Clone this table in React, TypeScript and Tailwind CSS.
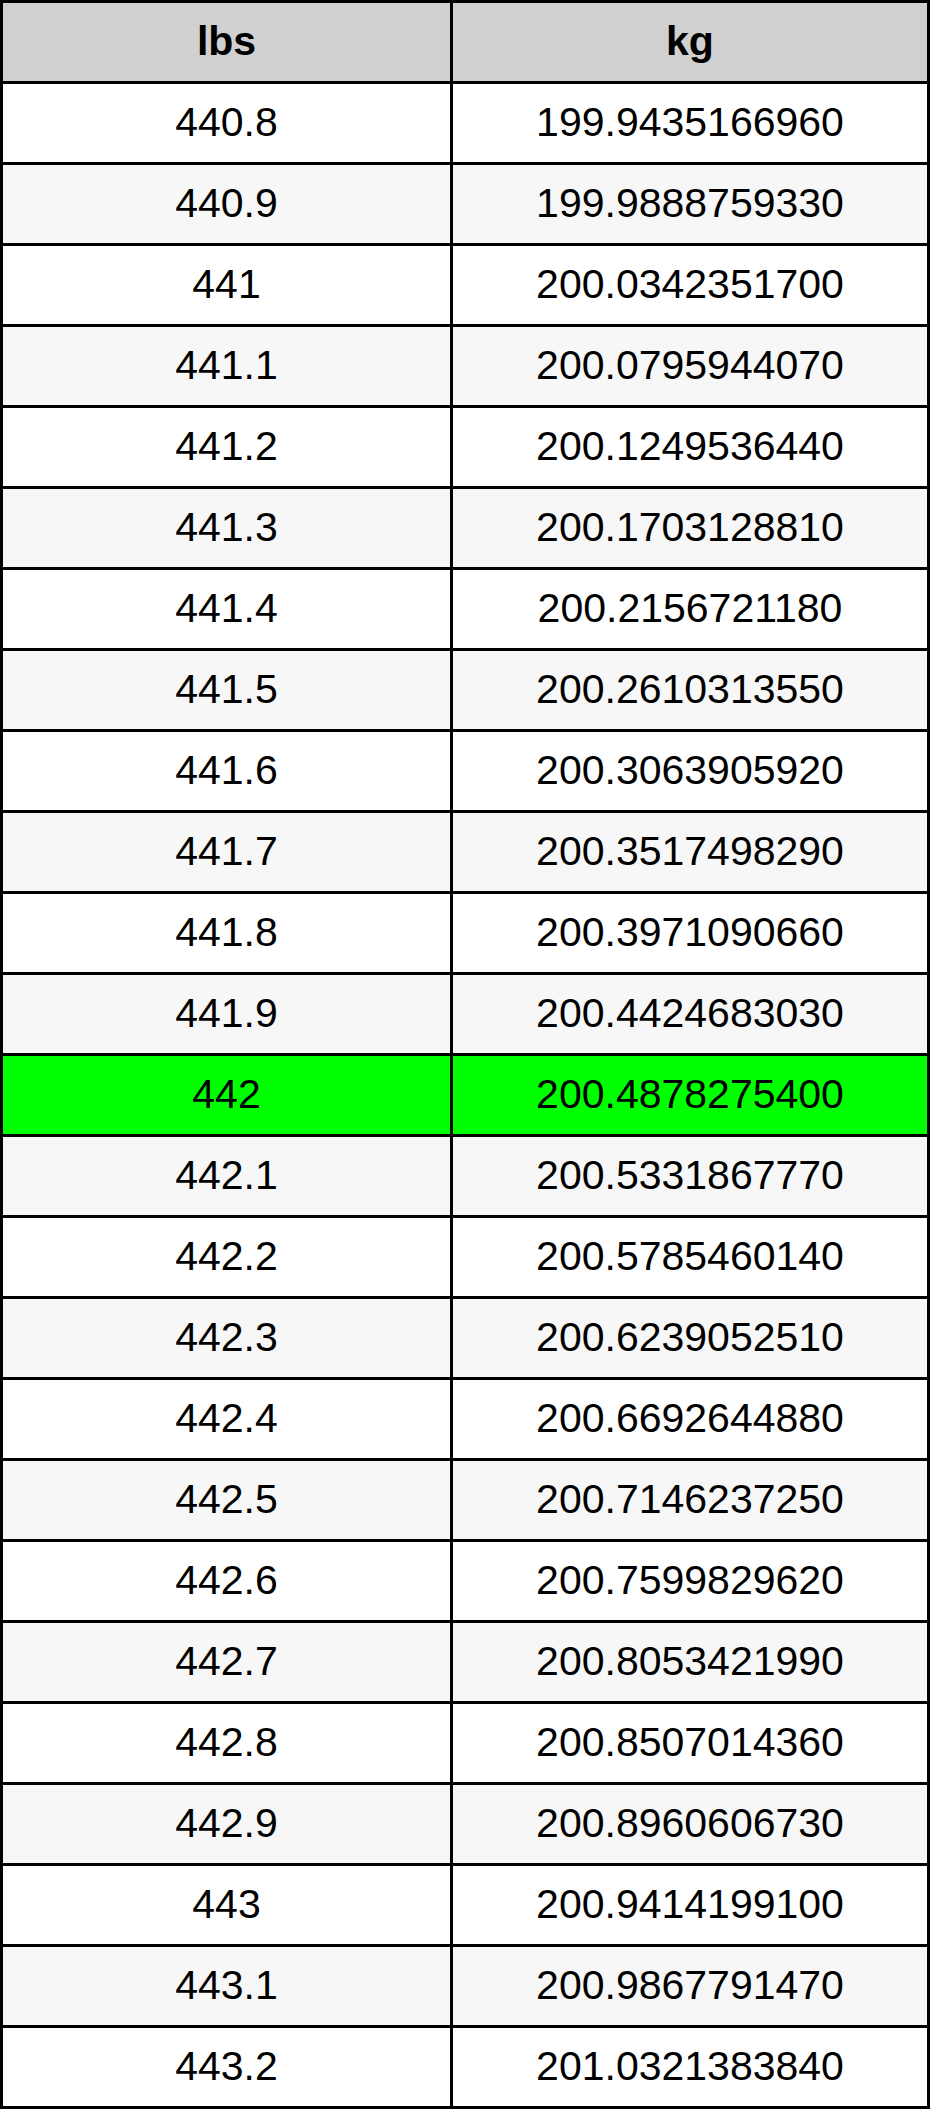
const rows: [string, string][] = [
  ["440.8", "199.9435166960"],
  ["440.9", "199.9888759330"],
  ["441", "200.0342351700"],
  ["441.1", "200.0795944070"],
  ["441.2", "200.1249536440"],
  ["441.3", "200.1703128810"],
  ["441.4", "200.2156721180"],
  ["441.5", "200.2610313550"],
  ["441.6", "200.3063905920"],
  ["441.7", "200.3517498290"],
  ["441.8", "200.3971090660"],
  ["441.9", "200.4424683030"],
  ["442", "200.4878275400"],
  ["442.1", "200.5331867770"],
  ["442.2", "200.5785460140"],
  ["442.3", "200.6239052510"],
  ["442.4", "200.6692644880"],
  ["442.5", "200.7146237250"],
  ["442.6", "200.7599829620"],
  ["442.7", "200.8053421990"],
  ["442.8", "200.8507014360"],
  ["442.9", "200.8960606730"],
  ["443", "200.9414199100"],
  ["443.1", "200.9867791470"],
  ["443.2", "201.0321383840"],
];

const rowBg = (i: number, value: string) => {
  if (value === "442") return "bg-[#00ff00]";
  return i % 2 === 0 ? "bg-white" : "bg-[#f7f7f7]";
};

const cell =
  "h-[81px] flex items-center justify-center border-r-[3px] border-b-[3px] border-black";

export default function App() {
  return (
    <div className="w-[930px] bg-white font-['Liberation_Sans',Arial,sans-serif] text-black">
      <div className="grid grid-cols-[450px_477px] border-l-[3px] border-t-[3px] border-black">
        {/* header */}
        <div className={`${cell} bg-[#d0d0d0] text-[41px] font-bold`}>lbs</div>
        <div className={`${cell} bg-[#d0d0d0] text-[41px] font-bold`}>kg</div>

        {rows.map(([lbs, kg], i) => (
          <div key={lbs} className="contents">
            <div className={`${cell} ${rowBg(i, lbs)} text-[41px]`}>{lbs}</div>
            <div className={`${cell} ${rowBg(i, lbs)} text-[41px]`}>{kg}</div>
          </div>
        ))}
      </div>
    </div>
  );
}
